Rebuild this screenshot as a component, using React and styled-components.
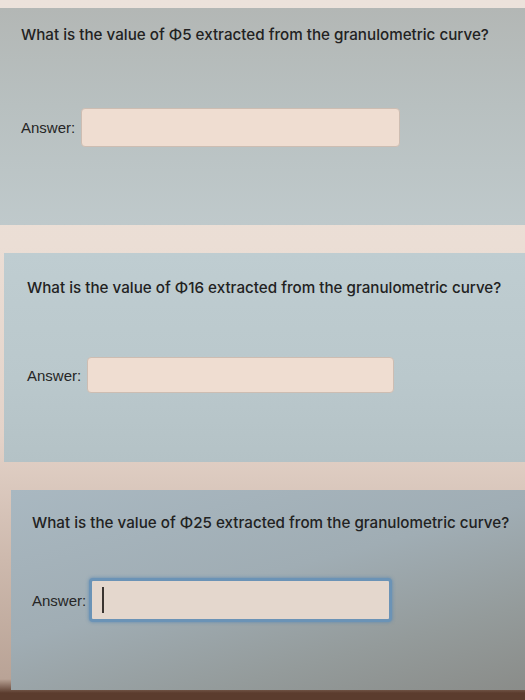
import styled, { createGlobalStyle } from "styled-components";

const GlobalStyle = createGlobalStyle`
  html, body {
    margin: 0;
    padding: 0;
    background: #e6d8cf;
  }
  * { box-sizing: border-box; }
`;

const tones = {
  first: "linear-gradient(180deg, #b3b7b5 0%, #b8c0c0 45%, #bfc9cb 100%)",
  second: "linear-gradient(180deg, #bfcdd1 0%, #bac8cc 60%, #b4c2c6 100%)",
  third: "linear-gradient(165deg, #a9b8c1 0%, #a0adb4 45%, #949b9b 75%, #8a8c89 100%)",
};

const Page = styled.div`
  width: 525px;
  height: 700px;
  overflow: hidden;
  display: flex;
  flex-direction: column;
  gap: 28px;
  padding-top: 8px;
  background: linear-gradient(
    180deg,
    #ece2db 0%,
    #ebded5 35%,
    #e4d3c9 62%,
    #cdb9ad 80%,
    #b9a396 97%,
    #5b3c2e 99%
  );
  font-family: "Liberation Sans", Arial, sans-serif;
  color: #252525;
`;

const Panel = styled.section`
  height: ${({ $height }) => $height}px;
  margin-left: ${({ $inset }) => $inset}px;
  background: ${({ $tone }) => tones[$tone]};
  padding: ${({ $top }) => $top}px 0 0 ${({ $left }) => $left}px;
  display: flex;
  flex-direction: column;
  gap: ${({ $gap }) => $gap}px;
`;

const Question = styled.p`
  margin: 0;
  font-family: Inter, "Liberation Sans", sans-serif;
  font-weight: 500;
  font-size: 15.2px;
  line-height: 18px;
  color: #222;
`;

const AnswerRow = styled.div`
  display: flex;
  align-items: center;
  gap: ${({ $tight }) => ($tight ? 3 : 6)}px;
`;

const Label = styled.span`
  font-size: 15px;
  color: #262626;
`;

const AnswerBox = styled.div`
  position: relative;
  width: ${({ $width }) => $width}px;
  height: ${({ $height }) => $height}px;
  border-radius: 4px;
  background: ${({ $focused }) => ($focused ? "#e4d7cd" : "#efddd1")};
  border: ${({ $focused }) =>
    $focused ? "3px solid #6b93b6" : "1px solid #cdbdb2"};
  box-shadow: ${({ $focused }) =>
    $focused ? "0 0 3px 1px rgba(90, 135, 175, 0.55)" : "none"};
`;

const Caret = styled.span`
  position: absolute;
  left: 10px;
  top: 6px;
  bottom: 6px;
  width: 1.5px;
  background: #3a3430;
`;

const questions = [
  { id: "5", tone: "first", inset: 0, height: 217, top: 18, left: 21, gap: 64, box: [319, 39] },
  { id: "16", tone: "second", inset: 4, height: 209, top: 26, left: 23, gap: 60, box: [307, 36] },
  { id: "25", tone: "third", inset: 11, height: 200, top: 24, left: 21, gap: 46, box: [303, 44], focused: true },
];

const App = () => {
  return (
    <>
      <GlobalStyle />
      <Page>
        {questions.map((q) => (
          <Panel
            key={q.id}
            $tone={q.tone}
            $inset={q.inset}
            $height={q.height}
            $top={q.top}
            $left={q.left}
            $gap={q.gap}
          >
            <Question>
              What is the value of Φ{q.id} extracted from the granulometric curve?
            </Question>
            <AnswerRow $tight={q.focused}>
              <Label>Answer:</Label>
              <AnswerBox $width={q.box[0]} $height={q.box[1]} $focused={q.focused}>
                {q.focused && <Caret />}
              </AnswerBox>
            </AnswerRow>
          </Panel>
        ))}
      </Page>
    </>
  );
};

export default App;
